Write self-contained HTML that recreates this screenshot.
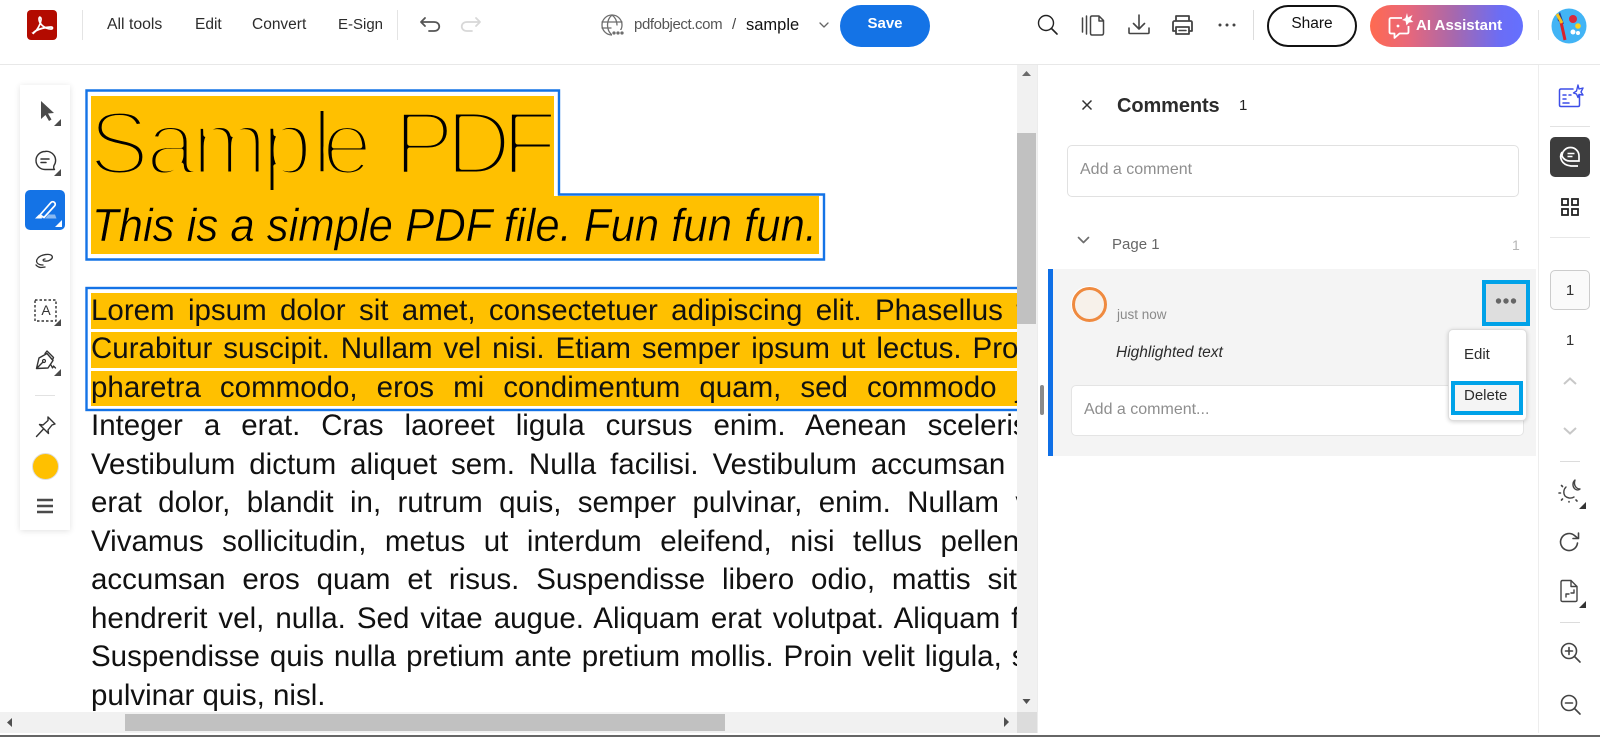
<!DOCTYPE html>
<html lang="en">
<head>
<meta charset="utf-8">
<title>Sample PDF</title>
<style>
html,body{margin:0;padding:0;width:1600px;height:737px;overflow:hidden;background:#fff;font-family:"Liberation Sans",sans-serif;color:#2c2c2c}
.t{position:absolute;white-space:nowrap;line-height:20px;font-size:16px}
.a{position:absolute}
svg{position:absolute;overflow:visible}
.i path,.i circle,.i rect,.i line{fill:none;stroke:#4b4b4b;stroke-width:1.7;stroke-linecap:round;stroke-linejoin:round}
#pdf{position:absolute;left:0;top:0;width:1017px;height:712px;overflow:hidden}
.l{position:absolute;left:91px;width:1203px;height:38px;line-height:38px;font-size:29.5px;color:#111;text-align:justify;text-align-last:justify;overflow:hidden}
.band{position:absolute;left:91px;width:926px;background:#ffc000}
.sep{position:absolute;background:#e4e4e4}
.tri{position:absolute;width:0;height:0;border-left:7px solid transparent;border-bottom:7px solid #4b4b4b}
</style>
</head>
<body>
<!-- PDF -->
<div id="pdf">
  <div class="band" style="top:293px;height:36px"></div>
  <div class="band" style="top:332px;height:36px"></div>
  <div class="band" style="top:371px;height:35px"></div>
  <svg width="1017" height="712" style="left:0;top:0">
    <defs><clipPath id="titleclip"><rect x="91" y="96" width="463" height="100"/></clipPath></defs>
    <rect x="91" y="96" width="463" height="100" fill="#ffc000"/>
    <rect x="91" y="196" width="728" height="58" fill="#ffc000"/>
    <g clip-path="url(#titleclip)"><text x="89 146 192 262 312 322 380 394 446 502" y="174" font-family="Liberation Sans" font-size="90" fill="#000" stroke="#ffc000" stroke-width="5" stroke-linejoin="round">Sample PDF</text></g>
    <text x="92" y="241" font-family="Liberation Sans" font-style="italic" font-size="46" textLength="725" lengthAdjust="spacingAndGlyphs" fill="#000" stroke="#ffc000" stroke-width=".5">This is a simple PDF file. Fun fun fun.</text>
    <path d="M86.500 90.500H559V194.500H824V259.500H86.500Z" fill="none" stroke="#1473e6" stroke-width="2.400"/>
    <rect x="86.500" y="288" width="1000" height="122" fill="none" stroke="#1473e6" stroke-width="2.400"/>
  </svg>
  <div class="l" style="top:292px">Lorem ipsum dolor sit amet, consectetuer adipiscing elit. Phasellus facilisis odio sed mi.</div>
  <div class="l" style="top:330px">Curabitur suscipit. Nullam vel nisi. Etiam semper ipsum ut lectus. Proin aliquam, erat eget</div>
  <div class="l" style="top:369px">pharetra commodo, eros mi condimentum quam, sed commodo justo quam ut velit.</div>
  <div class="l" style="top:407px">Integer a erat. Cras laoreet ligula cursus enim. Aenean scelerisque velit et tellus.</div>
  <div class="l" style="top:446px">Vestibulum dictum aliquet sem. Nulla facilisi. Vestibulum accumsan ante vitae elit. Nulla</div>
  <div class="l" style="top:484px">erat dolor, blandit in, rutrum quis, semper pulvinar, enim. Nullam varius congue risus.</div>
  <div class="l" style="top:523px">Vivamus sollicitudin, metus ut interdum eleifend, nisi tellus pellentesque elit, tristique</div>
  <div class="l" style="top:561px">accumsan eros quam et risus. Suspendisse libero odio, mattis sit amet, aliquet eget,</div>
  <div class="l" style="top:600px">hendrerit vel, nulla. Sed vitae augue. Aliquam erat volutpat. Aliquam feugiat vulputate nisl.</div>
  <div class="l" style="top:638px">Suspendisse quis nulla pretium ante pretium mollis. Proin velit ligula, sagittis at, egestas a,</div>
  <div class="l" style="top:677px;text-align-last:left">pulvinar quis, nisl.</div>
</div>

<!-- Scrollbars -->
<div class="a" style="left:1017px;top:65px;width:20px;height:647px;background:#f1f1f1"></div>
<div class="a" style="left:1017px;top:133px;width:19px;height:191px;background:#c1c1c1"></div>
<div class="a" style="left:0;top:712px;width:1017px;height:21px;background:#f1f1f1"></div>
<div class="a" style="left:125px;top:714px;width:600px;height:17px;background:#c1c1c1"></div>
<div class="a" style="left:1017px;top:712px;width:20px;height:21px;background:#dcdcdc"></div>
<svg width="1600" height="737" style="left:0;top:0">
  <path d="M1022 76l4.500-5 4.500 5z" fill="#6b6b6b"/>
  <path d="M1022.500 699h8l-4 5z" fill="#505050"/>
  <path d="M1004 717l5 5-5 5z" fill="#505050"/>
  <path d="M12 718l-5 4.500 5 4.500z" fill="#505050"/>
</svg>
<div class="a" style="left:0;top:735px;width:1600px;height:2px;background:#666"></div>

<!-- Top bar -->
<div class="a" style="left:0;top:64px;width:1600px;height:1px;background:#e8e8e8"></div>
<div class="a" style="left:27px;top:10px;width:30px;height:30px;border-radius:4px;background:#b30b00"></div>
<svg width="30" height="30" style="left:27px;top:10px"><path d="M6 23c3-1 7-7 8-13 .3-3-2-4-2-1 0 5 6 10 12 10 2 0 2-2 0-2-5 0-13 2-17 5-1 1 0 2-1 1z" fill="none" stroke="#fff" stroke-width="1.700"/></svg>
<div class="sep" style="left:82px;top:10px;width:1px;height:30px"></div>
<div class="t" style="left:107px;top:15px;font-size:15.800px">All tools</div>
<div class="t" style="left:195px;top:15px;font-size:15.500px">Edit</div>
<div class="t" style="left:252px;top:15px;font-size:15.500px">Convert</div>
<div class="t" style="left:338px;top:15px;font-size:15px">E-Sign</div>
<div class="sep" style="left:397px;top:10px;width:1px;height:30px"></div>
<svg class="i" width="24" height="16" style="left:419px;top:17px"><path d="M2 5h13c7 0 7 9 0 9h-5M6 1L2 5l4 4" style="stroke:#555;stroke-width:1.800"/></svg>
<svg class="i" width="24" height="16" style="left:459px;top:17px"><path d="M21 5H8c-7 0-7 9 0 9h5M17 1l4 4-4 4" style="stroke:#d8d8d8;stroke-width:1.800"/></svg>

<svg class="i" width="24" height="24" style="left:601px;top:14px">
  <circle cx="11" cy="11" r="10" style="stroke:#6e6e6e;stroke-width:1.300"/>
  <path d="M1 8h20M1 14h9M11 1c-6 5-6 15 0 20M11 1c4 3 5 7 5 10" style="stroke:#6e6e6e;stroke-width:1.300"/>
  <rect x="11" y="16" width="12" height="7" style="fill:#fff;stroke:none"/>
  <circle cx="13" cy="19" r=".8" style="stroke:#6e6e6e"/><circle cx="17" cy="19" r=".8" style="stroke:#6e6e6e"/><circle cx="21" cy="19" r=".8" style="stroke:#6e6e6e"/>
</svg>
<div class="t" style="left:634px;top:15px;font-size:15px;color:#555;letter-spacing:-.4px">pdfobject.com</div>
<div class="t" style="left:732px;top:15px;font-size:15px;color:#444">/</div>
<div class="t" style="left:746px;top:15px;font-size:16.500px;color:#111">sample</div>
<svg class="i" width="10" height="6" style="left:819px;top:22px"><path d="M1 1l4 4 4-4" style="stroke:#666;stroke-width:1.300"/></svg>
<div class="a" style="left:840px;top:5px;width:90px;height:42px;border-radius:21px;background:#1473e6"></div>
<div class="t" style="left:840px;top:14px;width:90px;text-align:center;color:#fff;font-weight:bold;font-size:15px">Save</div>

<svg class="i" width="24" height="24" style="left:1037px;top:14px"><circle cx="9" cy="9" r="7.500" style="stroke:#222;stroke-width:1.400"/><path d="M14.500 14.500L20 20" style="stroke:#222;stroke-width:1.600"/></svg>
<svg class="i" width="26" height="24" style="left:1081px;top:14px"><path d="M1.500 4v14M5.500 2v18M9.500 3.500c0-1 .5-1.500 1.500-1.500h7l4.500 4.500V19c0 1-.5 2-2 2H11c-1 0-1.500-1-1.500-2zM18 2v5h4.500" style="stroke:#444;stroke-width:1.500"/></svg>
<svg class="i" width="22" height="24" style="left:1128px;top:13px"><path d="M11 2v14M5.500 10.500L11 16l5.500-5.500M1 15v4.500c0 .6.400 1 1 1h18c.6 0 1-.4 1-1V15" style="stroke:#444;stroke-width:1.600"/></svg>
<svg class="i" width="24" height="24" style="left:1171px;top:13px"><path d="M5 8V3h13v5M5 18H2V9.500C2 8.500 2.800 8 3.500 8h16c.8 0 1.500.5 1.500 1.500V18h-3M5 14h13v7H5z" style="stroke:#444;stroke-width:1.800"/><path d="M8 17.500h7" style="stroke:#444;stroke-width:1.500"/></svg>
<svg width="20" height="4" style="left:1218px;top:23px"><circle cx="2" cy="2" r="1.500" fill="#444"/><circle cx="9" cy="2" r="1.500" fill="#444"/><circle cx="16" cy="2" r="1.500" fill="#444"/></svg>
<div class="sep" style="left:1253px;top:10px;width:1px;height:30px;background:#ddd"></div>
<div class="a" style="left:1267px;top:5px;width:86px;height:38px;border:2px solid #111;border-radius:21px"></div>
<div class="t" style="left:1267px;top:14px;width:90px;text-align:center;color:#111;font-size:15.500px">Share</div>
<div class="a" style="left:1370px;top:5px;width:153px;height:42px;border-radius:21px;background:linear-gradient(90deg,#ff6a50 0%,#e8677a 25%,#a768ad 55%,#6b6df5 85%,#6470ff 100%)"></div>
<svg width="26" height="28" style="left:1388px;top:12px"><path d="M14 6H3c-1 0-1.500.600-1.500 1.500V20c0 1 .5 1.500 1.500 1.500h3.500V26l5-4.500H19c1 0 1.500-.5 1.500-1.500v-6" fill="none" stroke="#fff" stroke-width="1.800" stroke-linejoin="round"/><path d="M19 1l1 4.500L24.500 3l-2 4.500 3 2.500-4.500.5-2.500 3-1-4.500-3.500-1 3.500-2z" fill="#fff"/><circle cx="10" cy="14" r="1.400" fill="#fff"/></svg>
<div class="t" style="left:1416px;top:16px;color:#fff;font-weight:bold;font-size:15px">AI Assistant</div>
<div class="sep" style="left:1538px;top:10px;width:1px;height:30px"></div>
<svg width="36" height="36" style="left:1551px;top:8px">
  <circle cx="18" cy="18" r="17.500" fill="#42b4f5"/>
  <path d="M7 13c-1-3 0-6 2-9l4 12" fill="#1f3d9c"/>
  <circle cx="22" cy="11" r="4" fill="#d92a3e"/><circle cx="27" cy="18" r="2.800" fill="#ffd21f"/>
  <circle cx="22" cy="24" r="2.500" fill="#fff"/><circle cx="27" cy="25" r="2" fill="#fff"/>
  <path d="M10 14l4 18" stroke="#d8232a" stroke-width="3"/><path d="M6 6l5 9" stroke="#f6c21c" stroke-width="3"/>
</svg>

<!-- Left toolbar -->
<div class="a" style="left:20px;top:85px;width:50px;height:445px;background:#fff;box-shadow:0 1px 6px rgba(0,0,0,.12)"></div>
<svg width="16" height="20" style="left:40px;top:101px"><path d="M1 0l13 12-6 .5 3.500 6-2.500 1.500-3.500-6L1 18z" fill="#4b4b4b"/></svg>
<div class="tri" style="left:54px;top:119px"></div>
<svg class="i" width="22" height="22" style="left:35px;top:150px"><path d="M10 1.500a9 9 0 1 0 0 18h9.500c-1-1-1-2.500-.5-4A9 9 0 0 0 10 1.500z" style="stroke:#333;stroke-width:1.400"/><path d="M6 9h8M6 12.500h5" style="stroke:#333;stroke-width:1.500"/></svg>
<div class="tri" style="left:54px;top:169px"></div>
<div class="a" style="left:25px;top:190px;width:40px;height:40px;background:#1473e6;border-radius:5px"></div>
<svg width="30" height="26" style="left:34px;top:198px"><path d="M6 17L17 4.500c1-1 2.500-1 3.500 0s1 2.500 0 3.500L10 19.500z" fill="none" stroke="#fff" stroke-width="1.700"/><path d="M1 20.500l4-4 3.500 3.500-1 .5z" fill="#fff"/><path d="M11 20.500l3.500-4H21l1.500 4z" fill="#8ab9f1"/></svg>
<div class="tri" style="left:55px;top:220px;border-bottom-color:#fff"></div>
<svg class="i" width="22" height="18" style="left:34px;top:252px"><path d="M9 13C3 13 1 9.500 4 6c3-3.500 12-5 14-2 1.500 2.500-3 6-8 5-1.500-.3-1-2 1-2M2 13c3 3.500 6 2.500 9 2" style="stroke:#333;stroke-width:1.300"/></svg>
<svg class="i" width="24" height="24" style="left:34px;top:299px"><rect x="1" y="1" width="21" height="21" style="stroke:#333;stroke-width:1.400;stroke-dasharray:2.500 2;stroke-linecap:butt"/></svg>
<div class="t" style="left:35px;top:300px;width:22px;text-align:center;font-size:14px;color:#333">A</div>
<div class="tri" style="left:54px;top:319px"></div>
<svg class="i" width="22" height="22" style="left:35px;top:350px"><path d="M1.500 18.500L4 8l8-4.500 6 7-5 7.500zM1.500 18.500L8 12M10 3.500L12 1l6.500 6.500-1 2.500" style="stroke:#333;stroke-width:1.400"/><circle cx="9" cy="11" r="1.500" style="stroke:#333;stroke-width:1.200"/><path d="M16 15l1.500 3 1-2 2 2" style="stroke:#333;stroke-width:1.300"/></svg>
<div class="tri" style="left:54px;top:369px"></div>
<div class="a" style="left:35px;top:395px;width:20px;height:1px;background:#e2e2e2"></div>
<svg class="i" width="22" height="22" style="left:35px;top:416px"><path d="M13 1l7 7-3 1-4 5 .5 3.500L4.500 8.500 8 9l5-4.500zM8.500 13L1.500 20.500" style="stroke:#333;stroke-width:1.400"/></svg>
<div class="a" style="left:32px;top:453px;width:25px;height:25px;border-radius:50%;background:#ffc000;border:1px solid #ddd"></div>
<svg width="18" height="16" style="left:36px;top:498px"><path d="M1 2h16M1 8h16M1 14h16" stroke="#4b4b4b" stroke-width="2.400"/></svg>

<!-- Comments panel -->
<div class="a" style="left:1037px;top:65px;width:1px;height:668px;background:#ececec"></div>
<div class="a" style="left:1040px;top:385px;width:4px;height:30px;border-radius:2px;background:#8a8a8a"></div>
<div class="a" style="left:1538px;top:65px;width:1px;height:668px;background:#ededed"></div>
<svg width="12" height="12" style="left:1081px;top:99px"><path d="M1.500 1.500l9 9M10.500 1.500l-9 9" stroke="#333" stroke-width="1.500"/></svg>
<div class="t" style="left:1117px;top:96px;font-size:20px;font-weight:bold;letter-spacing:-.1px;color:#2c2c2c">Comments</div>
<div class="t" style="left:1239px;top:96px;font-size:15px;color:#222">1</div>
<div class="a" style="left:1067px;top:145px;width:450px;height:50px;border:1px solid #e1e1e1;border-radius:5px"></div>
<div class="t" style="left:1080px;top:160px;color:#8e8e8e;font-size:16px">Add a comment</div>
<svg class="i" width="14" height="9" style="left:1077px;top:236px"><path d="M1.500 1.500L6.500 6.500l5-5" style="stroke:#6e6e6e;stroke-width:1.700"/></svg>
<div class="t" style="left:1112px;top:235px;color:#666;font-size:15px">Page 1</div>
<div class="t" style="left:1512px;top:235px;color:#b5b5b5;font-size:14px">1</div>

<div class="a" style="left:1048px;top:269px;width:488px;height:187px;background:#f4f4f4"></div>
<div class="a" style="left:1048px;top:269px;width:5px;height:187px;background:#0f6fe6"></div>
<div class="a" style="left:1071px;top:286px;width:36px;height:36px;border-radius:50%;background:#fff"></div>
<div class="a" style="left:1072px;top:287px;width:29px;height:29px;border-radius:50%;border:3px solid #ef8a3f;background:#f7f1ea"></div>
<div class="t" style="left:1117px;top:305px;font-size:13.500px;color:#8a8a8a">just now</div>
<div class="t" style="left:1116px;top:343px;font-size:15.500px;font-style:italic;color:#2c2c2c">Highlighted text</div>
<div class="a" style="left:1071px;top:385px;width:451px;height:49px;background:#fff;border:1px solid #e4e4e4;border-radius:5px"></div>
<div class="t" style="left:1084px;top:400px;font-size:16px;color:#8e8e8e">Add a comment...</div>
<div class="a" style="left:1482px;top:280px;width:40px;height:38px;background:#dedede;border:4px solid #00a2e8"></div>
<svg width="22" height="6" style="left:1495px;top:298px"><circle cx="3.500" cy="3" r="2.700" fill="#666"/><circle cx="11" cy="3" r="2.700" fill="#666"/><circle cx="18.500" cy="3" r="2.700" fill="#666"/></svg>
<div class="a" style="left:1448px;top:329px;width:77px;height:90px;background:#fff;border:1px solid #ddd;border-radius:5px;box-shadow:0 1px 4px rgba(0,0,0,.18)"></div>
<div class="t" style="left:1464px;top:345px;font-size:15px;color:#2c2c2c">Edit</div>
<div class="a" style="left:1451px;top:381px;width:64px;height:26px;background:#f4f4f4;border:4px solid #00a2e8"></div>
<div class="t" style="left:1464px;top:386px;font-size:15px;color:#2c2c2c">Delete</div>

<!-- Right rail -->
<svg class="i" width="26" height="24" style="left:1558px;top:84px"><path d="M15 5H3c-1 0-1.500.5-1.500 1.500V21c0 1 .5 1.500 1.500 1.500h17c1 0 1.500-.5 1.500-1.500V12M5 11h3M11 11h2M5 15h3M5 19h6" style="stroke:#3d4ee8;stroke-width:1.500"/><path d="M20 1l1 4 4-1-2 4 2 3-4-.5-1 3-1.500-3.500-3-1 3-2z" style="stroke:#3d4ee8;stroke-width:1.400"/></svg>
<div class="a" style="left:1550px;top:126px;width:40px;height:1px;background:#e2e2e2"></div>
<div class="a" style="left:1550px;top:137px;width:40px;height:40px;border-radius:5px;background:#3d3d3d"></div>
<svg width="24" height="24" style="left:1558px;top:145px"><path d="M21 15.500V11a8.500 8.500 0 1 0-17 0 8.500 8.500 0 0 0 8.500 5H21z" fill="none" stroke="#fff" stroke-width="1.700"/><path d="M9.500 8.500h7M9.500 11.500h5" stroke="#fff" stroke-width="1.500"/><path d="M4 7c-3 5-1 13 9 14h7" fill="none" stroke="#fff" stroke-width="1.700"/></svg>
<svg width="18" height="18" style="left:1561px;top:198px"><g fill="none" stroke="#222" stroke-width="1.800"><rect x="1" y="1" width="6" height="6"/><rect x="11" y="1" width="6" height="6"/><rect x="1" y="11" width="6" height="6"/><rect x="11" y="11" width="6" height="6"/></g></svg>
<div class="a" style="left:1550px;top:237px;width:40px;height:1px;background:#e8e8e8"></div>
<div class="a" style="left:1550px;top:270px;width:38px;height:38px;border:1px solid #ccc;border-radius:5px;background:#fafafa"></div>
<div class="t" style="left:1550px;top:281px;width:40px;text-align:center;font-size:15px;color:#333">1</div>
<div class="t" style="left:1550px;top:331px;width:40px;text-align:center;font-size:15px;color:#333">1</div>
<svg width="14" height="8" style="left:1563px;top:377px"><path d="M1 7l6-5.500L13 7" fill="none" stroke="#c8c8c8" stroke-width="2"/></svg>
<svg width="14" height="8" style="left:1563px;top:427px"><path d="M1 1l6 5.500L13 1" fill="none" stroke="#c8c8c8" stroke-width="2"/></svg>
<div class="a" style="left:1560px;top:461px;width:20px;height:1px;background:#dcdcdc"></div>
<svg class="i" width="24" height="24" style="left:1558px;top:479px"><path d="M8 8a7 7 0 0 0-1 9c2 2 6 3 9 1" style="stroke:#444;stroke-width:1.400"/><path d="M17 1a6 6 0 0 0 0 9c2 1.500 4 1 5 0-3 0-7-3-5-9z" style="stroke:#444;stroke-width:1.400"/><path d="M1 14h1.500M3.500 6.500l1 1M3.500 21l1-1M11 22.500v.5M18 21l1 1" style="stroke:#444;stroke-width:1.600"/></svg>
<div class="tri" style="left:1579px;top:502px;border-bottom-color:#333"></div>
<svg class="i" width="22" height="22" style="left:1559px;top:532px"><path d="M18.500 11a8.500 8.500 0 1 1-3-7.500l3 2.500M19.500 1v5.500H14" style="stroke:#444;stroke-width:1.600"/></svg>
<svg class="i" width="20" height="24" style="left:1560px;top:579px"><path d="M2.500 1.500H11l6 6V21c0 1-.5 1.500-1.500 1.500h-13C1.500 22.500 1 22 1 21V3c0-1 .5-1.500 1.500-1.500zM11 1.500V7.500h6" style="stroke:#444;stroke-width:1.400"/><path d="M6 18v-3h3M14 11v3h-3" style="stroke:#444;stroke-width:1.400"/></svg>
<div class="tri" style="left:1579px;top:601px;border-bottom-color:#333"></div>
<div class="a" style="left:1560px;top:622px;width:20px;height:1px;background:#dcdcdc"></div>
<svg class="i" width="22" height="22" style="left:1560px;top:642px"><circle cx="9" cy="9" r="7.500" style="stroke:#444;stroke-width:1.600"/><path d="M14.500 14.500L20 20M5.500 9h7M9 5.500v7" style="stroke:#444;stroke-width:1.600"/></svg>
<svg class="i" width="22" height="22" style="left:1560px;top:694px"><circle cx="9" cy="9" r="7.500" style="stroke:#444;stroke-width:1.600"/><path d="M14.500 14.500L20 20M5.500 9h7" style="stroke:#444;stroke-width:1.600"/></svg>
</body>
</html>
